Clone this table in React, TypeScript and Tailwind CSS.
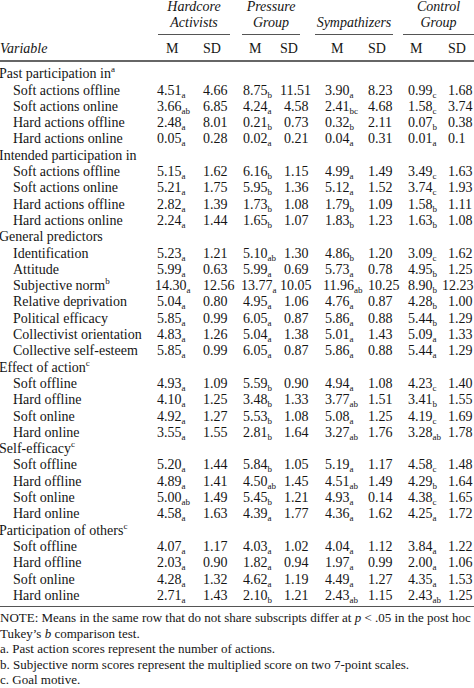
type Cell = [string, string, string];
type Row = { label: string; sup?: string; cells: Cell[] };
type Section = { title: string; sup?: string; rows: Row[] };

const sections: Section[] = [
  {
    title: "Past participation in",
    sup: "a",
    rows: [
      { label: "Soft actions offline", cells: [["4.51", "a", "4.66"], ["8.75", "b", "11.51"], ["3.90", "a", "8.23"], ["0.99", "c", "1.68"]] },
      { label: "Soft actions online", cells: [["3.66", "ab", "6.85"], ["4.24", "a", "4.58"], ["2.41", "bc", "4.68"], ["1.58", "c", "3.74"]] },
      { label: "Hard actions offline", cells: [["2.48", "a", "8.01"], ["0.21", "b", "0.73"], ["0.32", "b", "2.11"], ["0.07", "b", "0.38"]] },
      { label: "Hard actions online", cells: [["0.05", "a", "0.28"], ["0.02", "a", "0.21"], ["0.04", "a", "0.31"], ["0.01", "a", "0.1"]] },
    ],
  },
  {
    title: "Intended participation in",
    rows: [
      { label: "Soft actions offline", cells: [["5.15", "a", "1.62"], ["6.16", "b", "1.15"], ["4.99", "a", "1.49"], ["3.49", "c", "1.63"]] },
      { label: "Soft actions online", cells: [["5.21", "a", "1.75"], ["5.95", "b", "1.36"], ["5.12", "a", "1.52"], ["3.74", "c", "1.93"]] },
      { label: "Hard actions offline", cells: [["2.82", "a", "1.39"], ["1.73", "b", "1.08"], ["1.79", "b", "1.09"], ["1.58", "b", "1.11"]] },
      { label: "Hard actions online", cells: [["2.24", "a", "1.44"], ["1.65", "b", "1.07"], ["1.83", "b", "1.23"], ["1.63", "b", "1.08"]] },
    ],
  },
  {
    title: "General predictors",
    rows: [
      { label: "Identification", cells: [["5.23", "a", "1.21"], ["5.10", "ab", "1.30"], ["4.86", "b", "1.20"], ["3.09", "c", "1.62"]] },
      { label: "Attitude", cells: [["5.99", "a", "0.63"], ["5.99", "a", "0.69"], ["5.73", "a", "0.78"], ["4.95", "b", "1.25"]] },
      { label: "Subjective norm", sup: "b", cells: [["14.30", "a", "12.56"], ["13.77", "a", "10.05"], ["11.96", "ab", "10.25"], ["8.90", "b", "12.23"]] },
      { label: "Relative deprivation", cells: [["5.04", "a", "0.80"], ["4.95", "a", "1.06"], ["4.76", "a", "0.87"], ["4.28", "b", "1.00"]] },
      { label: "Political efficacy", cells: [["5.85", "a", "0.99"], ["6.05", "a", "0.87"], ["5.86", "a", "0.88"], ["5.44", "b", "1.29"]] },
      { label: "Collectivist orientation", cells: [["4.83", "a", "1.26"], ["5.04", "a", "1.38"], ["5.01", "a", "1.43"], ["5.09", "a", "1.33"]] },
      { label: "Collective self-esteem", cells: [["5.85", "a", "0.99"], ["6.05", "a", "0.87"], ["5.86", "a", "0.88"], ["5.44", "a", "1.29"]] },
    ],
  },
  {
    title: "Effect of action",
    sup: "c",
    rows: [
      { label: "Soft offline", cells: [["4.93", "a", "1.09"], ["5.59", "b", "0.90"], ["4.94", "a", "1.08"], ["4.23", "c", "1.40"]] },
      { label: "Hard offline", cells: [["4.10", "a", "1.25"], ["3.48", "b", "1.33"], ["3.77", "ab", "1.51"], ["3.41", "b", "1.55"]] },
      { label: "Soft online", cells: [["4.92", "a", "1.27"], ["5.53", "b", "1.08"], ["5.08", "a", "1.25"], ["4.19", "c", "1.69"]] },
      { label: "Hard online", cells: [["3.55", "a", "1.55"], ["2.81", "b", "1.64"], ["3.27", "ab", "1.76"], ["3.28", "ab", "1.78"]] },
    ],
  },
  {
    title: "Self-efficacy",
    sup: "c",
    rows: [
      { label: "Soft offline", cells: [["5.20", "a", "1.44"], ["5.84", "b", "1.05"], ["5.19", "a", "1.17"], ["4.58", "c", "1.48"]] },
      { label: "Hard offline", cells: [["4.89", "a", "1.41"], ["4.50", "ab", "1.45"], ["4.51", "ab", "1.49"], ["4.29", "b", "1.64"]] },
      { label: "Soft online", cells: [["5.00", "ab", "1.49"], ["5.45", "b", "1.21"], ["4.93", "a", "0.14"], ["4.38", "c", "1.65"]] },
      { label: "Hard online", cells: [["4.58", "a", "1.63"], ["4.39", "a", "1.77"], ["4.36", "a", "1.62"], ["4.25", "a", "1.72"]] },
    ],
  },
  {
    title: "Participation of others",
    sup: "c",
    rows: [
      { label: "Soft offline", cells: [["4.07", "a", "1.17"], ["4.03", "a", "1.02"], ["4.04", "a", "1.12"], ["3.84", "a", "1.22"]] },
      { label: "Hard offline", cells: [["2.03", "a", "0.90"], ["1.82", "a", "0.94"], ["1.97", "a", "0.99"], ["2.00", "a", "1.06"]] },
      { label: "Soft online", cells: [["4.28", "a", "1.32"], ["4.62", "a", "1.19"], ["4.49", "a", "1.27"], ["4.35", "a", "1.53"]] },
      { label: "Hard online", cells: [["2.71", "a", "1.43"], ["2.10", "b", "1.21"], ["2.43", "ab", "1.15"], ["2.43", "ab", "1.25"]] },
    ],
  },
];

const grid =
  "grid grid-cols-[157px_46px_40px_41px_41px_43px_40px_40px_26px] h-[16.3px] leading-[16.3px] whitespace-nowrap";

function Sup({ children }: { children: string }) {
  return <span className="relative -top-[6px] text-[9px] leading-none">{children}</span>;
}

function Mean({ value, sub }: { value: string; sub: string }) {
  return (
    <div className={value.length > 4 ? "-ml-[2px]" : ""}>
      {value}
      <span className="relative top-[3px] text-[9px] leading-none">{sub}</span>
    </div>
  );
}

// wide SD values in the Pressure and Control columns sit a little to the left
function sdShift(sd: string, i: number) {
  if (sd.length <= 4) return "";
  if (i === 1) return "-ml-[4px]";
  if (i === 3) return "-ml-[6px]";
  return "";
}

function DataRow({ row }: { row: Row }) {
  return (
    <div className={grid}>
      <div className="pl-[13px]">
        {row.label}
        {row.sup && <Sup>{row.sup}</Sup>}
      </div>
      {row.cells.map(([m, sub, sd], i) => [
        <Mean key={`m${i}`} value={m} sub={sub} />,
        <div key={`s${i}`} className={sdShift(sd, i)}>
          {sd}
        </div>,
      ])}
    </div>
  );
}

function SectionTitle({ title, sup }: { title: string; sup?: string }) {
  return (
    <div className="h-[16.3px] leading-[16.3px] whitespace-nowrap -ml-[1px]">
      {title}
      {sup && <Sup>{sup}</Sup>}
    </div>
  );
}

function GroupHead({ lines, w, ml }: { lines: string[]; w: string; ml: string }) {
  return (
    <div className={`${w} ${ml} border-b border-[#555] pb-[3px] text-center italic leading-[16px]`}>
      {lines.map((l, i) => (
        <div key={i} className="h-[16px]">
          {l}
        </div>
      ))}
    </div>
  );
}

export default function App() {
  return (
    <div
      className="w-[474px] h-[688px] overflow-hidden bg-white text-[#151515] text-[14px]"
      style={{ fontFamily: '"Liberation Serif", "Times New Roman", serif' }}
    >
      <div className="flex -mt-[1px] pl-[158px]">
        <GroupHead lines={["Hardcore", "Activists"]} w="w-[72px]" ml="ml-0" />
        <GroupHead lines={["Pressure", "Group"]} w="w-[58px]" ml="ml-[12px]" />
        <GroupHead lines={["", "Sympathizers"]} w="w-[78px]" ml="ml-[15px]" />
        <GroupHead lines={["Control", "Group"]} w="w-[71px]" ml="ml-[10px]" />
      </div>

      <div className="pt-[6px] pb-[3px] border-b-2 border-[#666]">
        <div className={grid}>
          <div className="italic">Variable</div>
          <div className="pl-[9px]">M</div>
          <div>SD</div>
          <div className="pl-[6px]">M</div>
          <div className="-ml-[4px]">SD</div>
          <div className="pl-[6px]">M</div>
          <div>SD</div>
          <div className="pl-[2px]">M</div>
          <div>SD</div>
        </div>
      </div>

      <div className="pt-[4px] pb-[2px] border-b border-[#555]">
        {sections.map((s) => (
          <div key={s.title}>
            <SectionTitle title={s.title} sup={s.sup} />
            {s.rows.map((r) => (
              <DataRow key={s.title + r.label} row={r} />
            ))}
          </div>
        ))}
      </div>

      <div className="pt-[3px] leading-[15.5px] whitespace-nowrap text-[13px]">
        <div>
          NOTE: Means in the same row that do not share subscripts differ at <span className="italic">p</span> &lt; .05 in the post hoc
        </div>
        <div>
          Tukey’s <span className="italic">b</span> comparison test.
        </div>
        <div>a. Past action scores represent the number of actions.</div>
        <div>b. Subjective norm scores represent the multiplied score on two 7-point scales.</div>
        <div>c. Goal motive.</div>
      </div>
    </div>
  );
}
